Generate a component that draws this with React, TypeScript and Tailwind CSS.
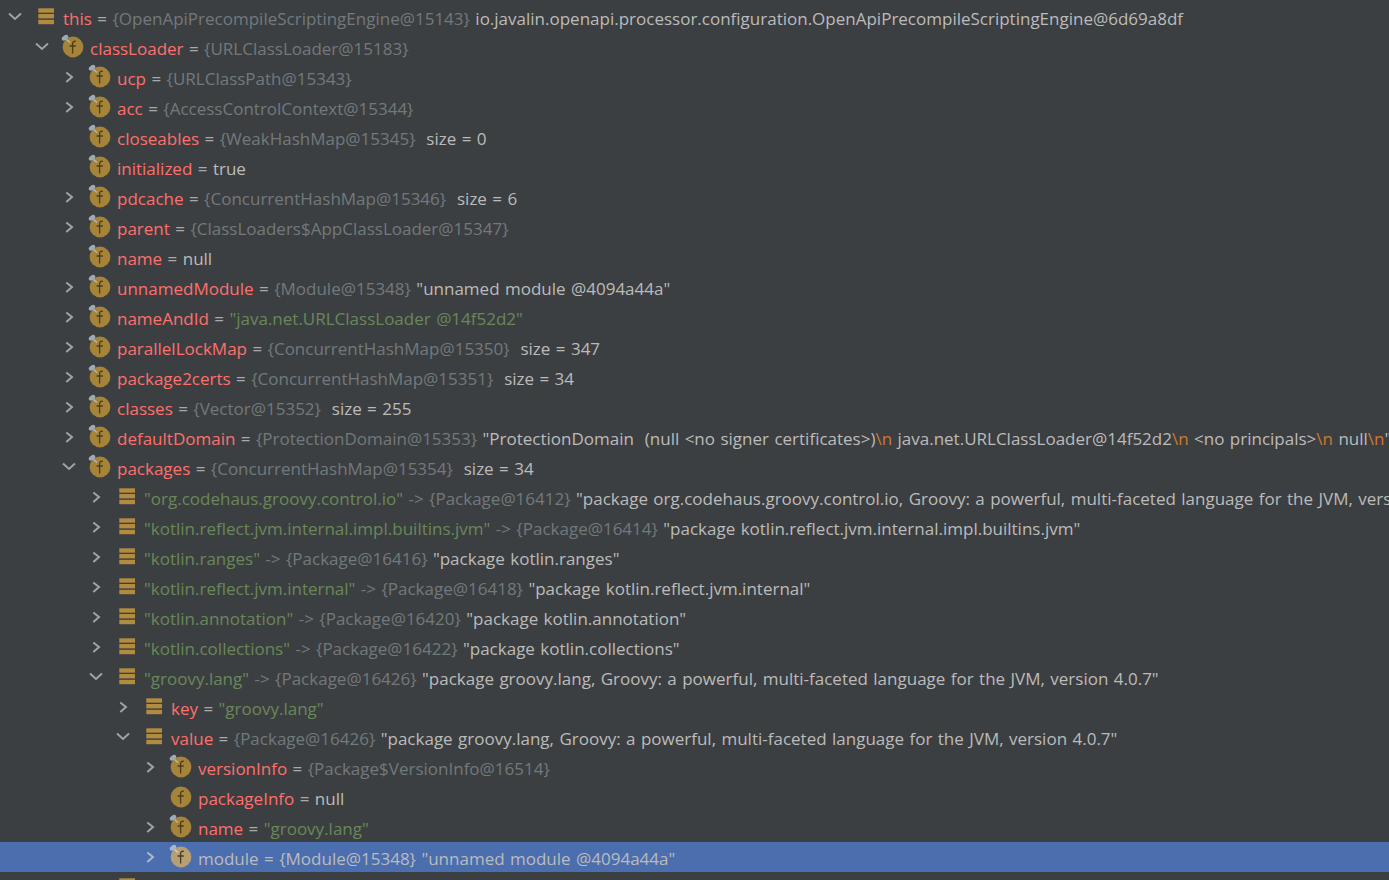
import React from "react";

type Kind = "n" | "e" | "t" | "s" | "v" | "x";
type Seg = [Kind, string];
type Row = {
  level: number;
  arrow?: "down" | "right";
  icon: "f" | "bars";
  pin?: boolean;
  selected?: boolean;
  segs: Seg[];
};

const kindClass: Record<Kind, string> = {
  n: "text-[#FF6F6C]",
  e: "text-[#A9A9A9]",
  t: "text-[#72797C]",
  s: "text-[#6A8759]",
  v: "text-[#BBBBBB]",
  x: "text-[#CC7832]",
};

const levelClass = ["pl-0", "pl-[27px]", "pl-[54px]", "pl-[81px]", "pl-[108px]", "pl-[135px]"];

const f = (
  level: number,
  arrow: Row["arrow"],
  name: string,
  type: string,
  rest: Seg[] = [],
  pin = true,
): Row => ({
  level,
  arrow,
  icon: "f",
  pin,
  segs: [["n", name], ["e", " = "], ["t", type], ...rest],
});

const pkg = (key: string, type: string, desc: string, arrow: Row["arrow"] = "right"): Row => ({
  level: 3,
  arrow,
  icon: "bars",
  segs: [["s", key], ["t", " -> " + type + " "], ["v", desc]],
});

const rows: Row[] = [
  {
    level: 0,
    arrow: "down",
    icon: "bars",
    segs: [
      ["n", "this"],
      ["e", " = "],
      ["t", "{OpenApiPrecompileScriptingEngine@15143} "],
      ["v", "io.javalin.openapi.processor.configuration.OpenApiPrecompileScriptingEngine@6d69a8df"],
    ],
  },
  f(1, "down", "classLoader", "{URLClassLoader@15183}"),
  f(2, "right", "ucp", "{URLClassPath@15343}"),
  f(2, "right", "acc", "{AccessControlContext@15344}"),
  f(2, undefined, "closeables", "{WeakHashMap@15345}", [["v", "  size = 0"]]),
  { level: 2, icon: "f", pin: true, segs: [["n", "initialized"], ["e", " = "], ["v", "true"]] },
  f(2, "right", "pdcache", "{ConcurrentHashMap@15346}", [["v", "  size = 6"]]),
  f(2, "right", "parent", "{ClassLoaders$AppClassLoader@15347}"),
  { level: 2, icon: "f", pin: true, segs: [["n", "name"], ["e", " = "], ["v", "null"]] },
  f(2, "right", "unnamedModule", "{Module@15348}", [["v", ' "unnamed module @4094a44a"']]),
  { level: 2, arrow: "right", icon: "f", pin: true, segs: [["n", "nameAndId"], ["e", " = "], ["s", '"java.net.URLClassLoader @14f52d2"']] },
  f(2, "right", "parallelLockMap", "{ConcurrentHashMap@15350}", [["v", "  size = 347"]]),
  f(2, "right", "package2certs", "{ConcurrentHashMap@15351}", [["v", "  size = 34"]]),
  f(2, "right", "classes", "{Vector@15352}", [["v", "  size = 255"]]),
  f(2, "right", "defaultDomain", "{ProtectionDomain@15353}", [
    ["v", ' "ProtectionDomain  (null <no signer certificates>)'],
    ["x", "\\n"],
    ["v", " java.net.URLClassLoader@14f52d2"],
    ["x", "\\n"],
    ["v", " <no principals>"],
    ["x", "\\n"],
    ["v", " null"],
    ["x", "\\n"],
    ["v", '"'],
  ]),
  f(2, "down", "packages", "{ConcurrentHashMap@15354}", [["v", "  size = 34"]]),
  pkg('"org.codehaus.groovy.control.io"', "{Package@16412}", '"package org.codehaus.groovy.control.io, Groovy: a powerful, multi-faceted language for the JVM, version 4.0.7"'),
  pkg('"kotlin.reflect.jvm.internal.impl.builtins.jvm"', "{Package@16414}", '"package kotlin.reflect.jvm.internal.impl.builtins.jvm"'),
  pkg('"kotlin.ranges"', "{Package@16416}", '"package kotlin.ranges"'),
  pkg('"kotlin.reflect.jvm.internal"', "{Package@16418}", '"package kotlin.reflect.jvm.internal"'),
  pkg('"kotlin.annotation"', "{Package@16420}", '"package kotlin.annotation"'),
  pkg('"kotlin.collections"', "{Package@16422}", '"package kotlin.collections"'),
  pkg('"groovy.lang"', "{Package@16426}", '"package groovy.lang, Groovy: a powerful, multi-faceted language for the JVM, version 4.0.7"', "down"),
  { level: 4, arrow: "right", icon: "bars", segs: [["n", "key"], ["e", " = "], ["s", '"groovy.lang"']] },
  {
    level: 4,
    arrow: "down",
    icon: "bars",
    segs: [["n", "value"], ["e", " = "], ["t", "{Package@16426} "], ["v", '"package groovy.lang, Groovy: a powerful, multi-faceted language for the JVM, version 4.0.7"']],
  },
  f(5, "right", "versionInfo", "{Package$VersionInfo@16514}"),
  { level: 5, icon: "f", segs: [["n", "packageInfo"], ["e", " = "], ["v", "null"]] },
  { level: 5, arrow: "right", icon: "f", pin: true, segs: [["n", "name"], ["e", " = "], ["s", '"groovy.lang"']] },
  {
    level: 5,
    arrow: "right",
    icon: "f",
    pin: true,
    selected: true,
    segs: [["v", "module"], ["v", " = "], ["v", "{Module@15348} "], ["v", '"unnamed module @4094a44a"']],
  },
  { level: 3, arrow: "right", icon: "bars", segs: [] },
];

function Chevron({ dir, selected }: { dir?: "down" | "right"; selected?: boolean }) {
  const c = selected ? "#A9B9D2" : "#A0A3A5";
  return (
    <svg width="30" height="30" viewBox="0 0 30 30" className="shrink-0" fill="none">
      {dir === "down" && <path d="M9 11.5 L15 17 L21 11.5" stroke={c} strokeWidth="2" />}
      {dir === "right" && <path d="M12.3 10.5 L18 15 L12.3 20" stroke={c} strokeWidth="2" />}
    </svg>
  );
}

function Icon({ row }: { row: Row }) {
  const circle = row.selected ? "#B69F72" : "#A5843A";
  return (
    <svg width="33" height="30" viewBox="0 0 33 30" className="shrink-0" fill="none">
      {row.icon === "bars" ? (
        <g fill="#B08B40">
          <rect x="8.3" y="6.3" width="15.7" height="4.4" />
          <rect x="8.3" y="12" width="15.7" height="4.4" />
          <rect x="8.3" y="17.8" width="15.7" height="4.4" />
        </g>
      ) : (
        <g>
          <circle cx="16" cy="15" r="10.4" fill={circle} />
          <path
            d="M18.8 9.4 C16.6 8.9 15.6 9.8 15.6 11.8 V21.4 M12.6 14 H18.8"
            stroke="#4A3C1C"
            strokeWidth="1.3"
          />
          {row.pin && (
            <g>
              <path d="M9.5 7.5 L13 10.5" stroke={row.selected ? "#C8D2E0" : "#B4BDC3"} strokeWidth="1.2" />
              <ellipse
                cx="8"
                cy="5.8"
                rx="3.6"
                ry="2.3"
                transform="rotate(-35 8 5.8)"
                fill={row.selected ? "#A6B8CE" : "#9DABB3"}
              />
            </g>
          )}
        </g>
      )}
    </svg>
  );
}

export default function App() {
  return (
    <div className="w-full h-[880px] overflow-hidden bg-[#3C3F41] pt-[2px] font-['Open_Sans','Noto_Sans',sans-serif] text-[17px] [word-spacing:1px]">
      {rows.map((r, i) => (
        <div
          key={i}
          className={`flex items-center h-[30px] whitespace-pre overflow-hidden ${levelClass[r.level]} ${r.selected ? "bg-[#4B6EAF]" : ""}`}
        >
          <Chevron dir={r.arrow} selected={r.selected} />
          <Icon row={r} />
          <span className="leading-[30px] mt-[3px]">
            {r.segs.map((s, j) => (
              <span key={j} className={kindClass[s[0]]}>
                {s[1]}
              </span>
            ))}
          </span>
        </div>
      ))}
    </div>
  );
}
